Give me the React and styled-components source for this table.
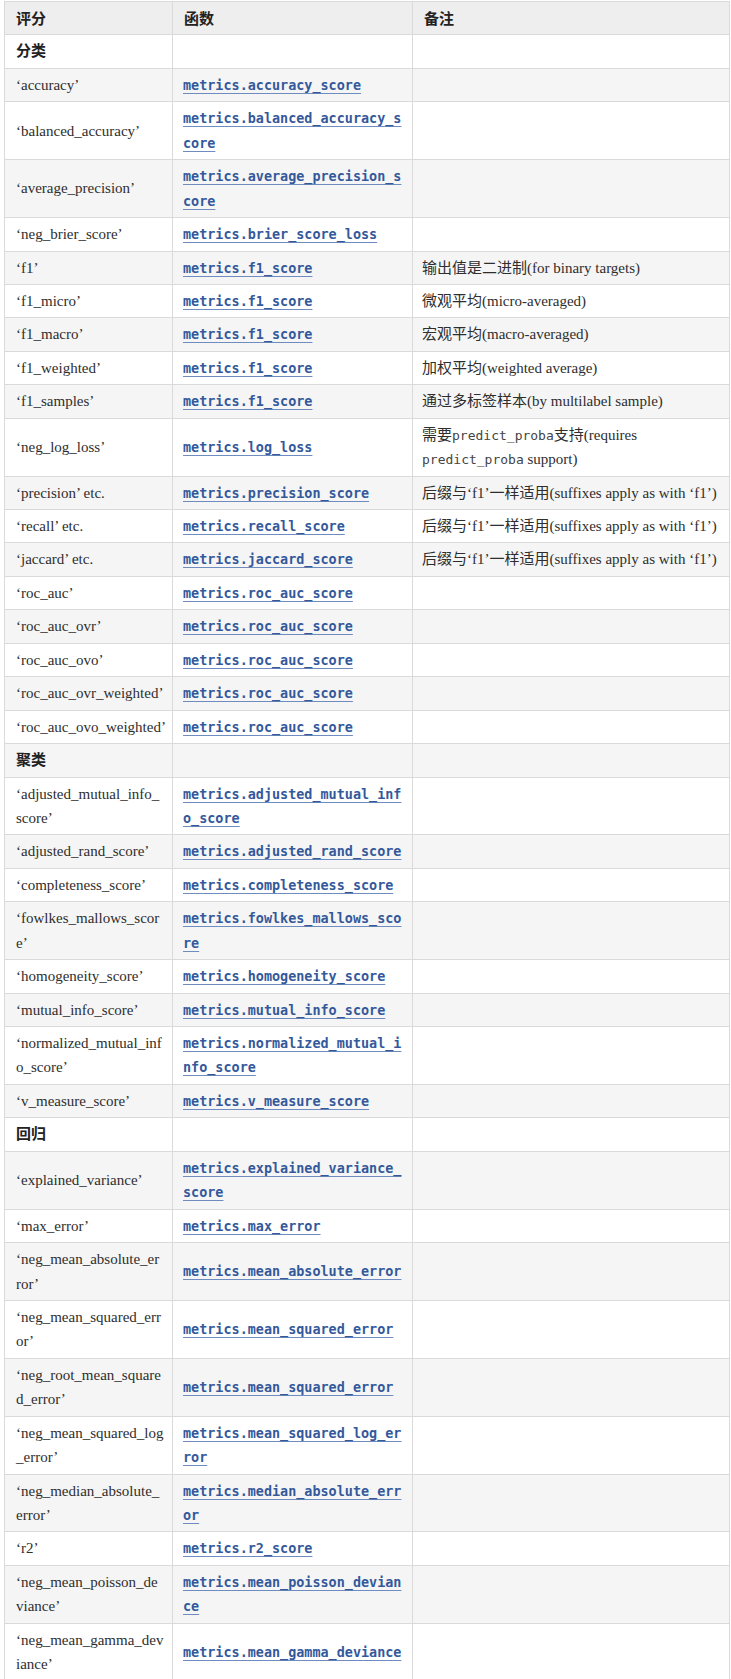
import React from "react";
import styled, { createGlobalStyle } from "styled-components";

const GlobalStyle = createGlobalStyle`
  html, body { margin: 0; padding: 0; background: #ffffff; }
`;

const Table = styled.table`
  border-collapse: collapse;
  table-layout: fixed;
  width: 726px;
  margin: 1px 0 0 4px;
  font-family: "Liberation Serif", "Noto Sans CJK SC", serif;
  font-size: 15px;
  color: #2e2e2e;
`;

const Row = styled.tr`
  background: ${(p) => (p.$striped ? "#f5f5f5" : "#ffffff")};
`;

const HeadRow = styled.tr`
  background: #eeeeee;
`;

const HeadCell = styled.th`
  border: 1px solid #dadada;
  padding: 4px 11px;
  line-height: 24.44px;
  text-align: left;
  font-family: "Noto Sans CJK SC", "Liberation Sans", sans-serif;
  font-weight: 700;
  font-size: 15px;
  color: #222222;
`;

const Cell = styled.td`
  border: 1px solid #dadada;
  padding: 4px 10px;
  line-height: 24.44px;
  vertical-align: middle;
`;

const ScoreCell = styled(Cell)`
  padding: 4px 4px 4px 11px;
  white-space: pre-line;
  word-break: break-all;
`;

const FnCell = styled(Cell)`
  padding: 4px 8px 4px 10px;
  word-break: break-all;
`;

const NoteCell = styled(Cell)`
  padding: 4px 9px;
`;

const SectionLabel = styled.span`
  font-family: "Noto Sans CJK SC", "Liberation Sans", sans-serif;
  font-weight: 700;
  font-size: 15px;
  line-height: 1;
  color: #222222;
`;

const FnLink = styled.a`
  font-family: "DejaVu Sans Mono", "Liberation Mono", monospace;
  font-size: 13.45px;
  line-height: 1;
  font-weight: 700;
  color: #34599b;
  text-decoration: underline;
  text-decoration-color: #6f8cc0;
  text-underline-offset: 3px;
  text-decoration-thickness: 1px;
`;

const InlineCode = styled.code`
  font-family: "DejaVu Sans Mono", "Liberation Mono", monospace;
  font-size: 13px;
  line-height: 1;
  color: #444444;
`;

const suffixNote = "后缀与‘f1’一样适用(suffixes apply as with ‘f1’)";

const rows = [
  { section: "分类" },
  { score: "‘accuracy’", fn: "metrics.accuracy_score" },
  { score: "‘balanced_accuracy’", fn: "metrics.balanced_accuracy_score" },
  { score: "‘average_precision’", fn: "metrics.average_precision_score" },
  { score: "‘neg_brier_score’", fn: "metrics.brier_score_loss" },
  { score: "‘f1’", fn: "metrics.f1_score", note: "输出值是二进制(for binary targets)" },
  { score: "‘f1_micro’", fn: "metrics.f1_score", note: "微观平均(micro-averaged)" },
  { score: "‘f1_macro’", fn: "metrics.f1_score", note: "宏观平均(macro-averaged)" },
  { score: "‘f1_weighted’", fn: "metrics.f1_score", note: "加权平均(weighted average)" },
  { score: "‘f1_samples’", fn: "metrics.f1_score", note: "通过多标签样本(by multilabel sample)" },
  {
    score: "‘neg_log_loss’",
    fn: "metrics.log_loss",
    note: (
      <>
        需要<InlineCode>predict_proba</InlineCode>支持(requires <InlineCode>predict_proba</InlineCode> support)
      </>
    ),
  },
  { score: "‘precision’ etc.", fn: "metrics.precision_score", note: suffixNote },
  { score: "‘recall’ etc.", fn: "metrics.recall_score", note: suffixNote },
  { score: "‘jaccard’ etc.", fn: "metrics.jaccard_score", note: suffixNote },
  { score: "‘roc_auc’", fn: "metrics.roc_auc_score" },
  { score: "‘roc_auc_ovr’", fn: "metrics.roc_auc_score" },
  { score: "‘roc_auc_ovo’", fn: "metrics.roc_auc_score" },
  { score: "‘roc_auc_ovr_weighted’", fn: "metrics.roc_auc_score" },
  { score: "‘roc_auc_ovo_weighted’", fn: "metrics.roc_auc_score" },
  { section: "聚类" },
  { score: "‘adjusted_mutual_info_\nscore’", fn: "metrics.adjusted_mutual_info_score" },
  { score: "‘adjusted_rand_score’", fn: "metrics.adjusted_rand_score" },
  { score: "‘completeness_score’", fn: "metrics.completeness_score" },
  { score: "‘fowlkes_mallows_scor\ne’", fn: "metrics.fowlkes_mallows_score" },
  { score: "‘homogeneity_score’", fn: "metrics.homogeneity_score" },
  { score: "‘mutual_info_score’", fn: "metrics.mutual_info_score" },
  { score: "‘normalized_mutual_inf\no_score’", fn: "metrics.normalized_mutual_info_score" },
  { score: "‘v_measure_score’", fn: "metrics.v_measure_score" },
  { section: "回归" },
  { score: "‘explained_variance’", fn: "metrics.explained_variance_score" },
  { score: "‘max_error’", fn: "metrics.max_error" },
  { score: "‘neg_mean_absolute_er\nror’", fn: "metrics.mean_absolute_error" },
  { score: "‘neg_mean_squared_err\nor’", fn: "metrics.mean_squared_error" },
  { score: "‘neg_root_mean_square\nd_error’", fn: "metrics.mean_squared_error" },
  { score: "‘neg_mean_squared_log\n_error’", fn: "metrics.mean_squared_log_error" },
  { score: "‘neg_median_absolute_\nerror’", fn: "metrics.median_absolute_error" },
  { score: "‘r2’", fn: "metrics.r2_score" },
  { score: "‘neg_mean_poisson_de\nviance’", fn: "metrics.mean_poisson_deviance" },
  { score: "‘neg_mean_gamma_dev\niance’", fn: "metrics.mean_gamma_deviance" },
];

export default function App() {
  return (
    <>
      <GlobalStyle />
      <Table>
        <colgroup>
          <col style={{ width: 168 }} />
          <col style={{ width: 240 }} />
          <col />
        </colgroup>
        <thead>
          <HeadRow>
            <HeadCell>评分</HeadCell>
            <HeadCell>函数</HeadCell>
            <HeadCell>备注</HeadCell>
          </HeadRow>
        </thead>
        <tbody>
          {rows.map((r, i) => (
            <Row key={i} $striped={i % 2 === 1}>
              {r.section ? (
                <>
                  <ScoreCell>
                    <SectionLabel>{r.section}</SectionLabel>
                  </ScoreCell>
                  <FnCell />
                  <NoteCell />
                </>
              ) : (
                <>
                  <ScoreCell>{r.score}</ScoreCell>
                  <FnCell>
                    <FnLink href="#">{r.fn}</FnLink>
                  </FnCell>
                  <NoteCell>{r.note}</NoteCell>
                </>
              )}
            </Row>
          ))}
        </tbody>
      </Table>
    </>
  );
}
